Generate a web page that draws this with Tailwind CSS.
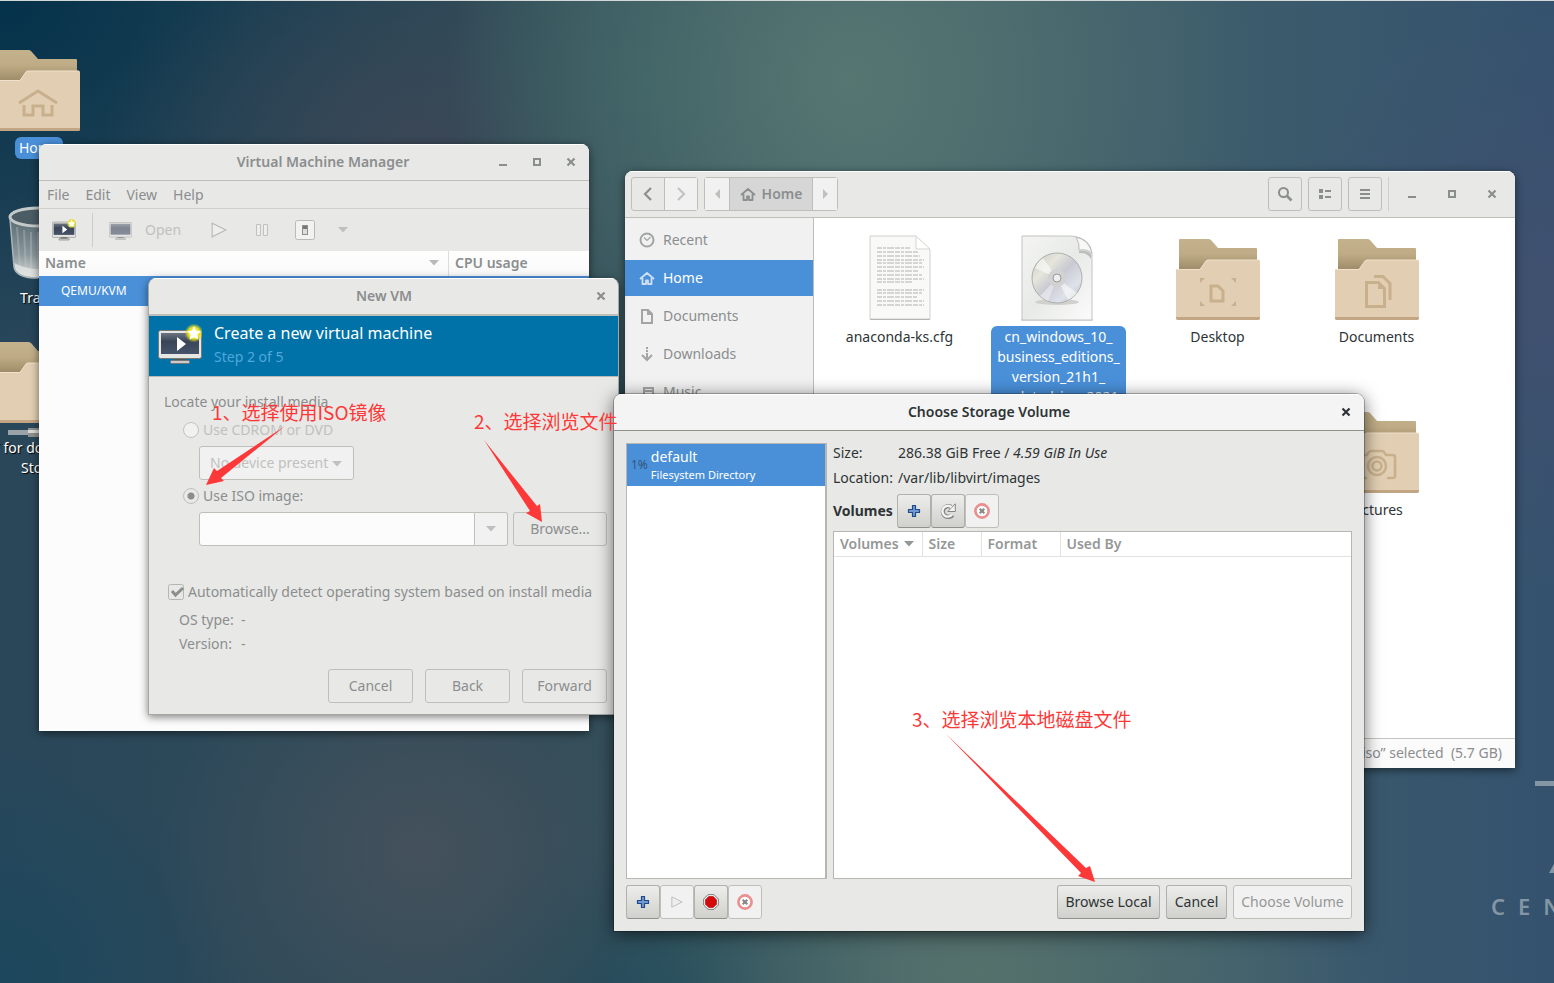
<!DOCTYPE html>
<html lang="en">
<head>
<meta charset="utf-8">
<title>Desktop</title>
<script src="https://cdn.jsdelivr.net/npm/@tailwindcss/browser@4"></script>
</head>
<body class="font-['Noto_Sans','Noto_Sans_CJK_SC',sans-serif] text-sm leading-5 text-[#8b8e8f]">
<svg class="absolute h-0 w-0" aria-hidden="true">
  <defs>
    <linearGradient id="gBack" x1="0" y1="0" x2="0" y2="1"><stop offset="0" stop-color="#c4b28c"/><stop offset=".5" stop-color="#bfac86"/><stop offset="1" stop-color="#9f8d6a"/></linearGradient>
    <linearGradient id="gScreen" x1="0" y1="0" x2="0" y2="1"><stop offset="0" stop-color="#6a7482"/><stop offset=".4" stop-color="#3a4558"/><stop offset="1" stop-color="#46536a"/></linearGradient>
    <linearGradient id="gPaper" x1="0" y1="0" x2="1" y2="1"><stop offset="0" stop-color="#f4f5f3"/><stop offset=".5" stop-color="#e8eae7"/><stop offset="1" stop-color="#fbfbfb"/></linearGradient>
    <linearGradient id="gDisc" x1="0" y1="0" x2="1" y2="1"><stop offset="0" stop-color="#c6c6c6"/><stop offset=".3" stop-color="#e6e6dc"/><stop offset=".5" stop-color="#c9c9d2"/><stop offset=".75" stop-color="#dfe2ea"/><stop offset="1" stop-color="#b9babc"/></linearGradient>
    <linearGradient id="gCan" x1="0" y1="0" x2="0" y2="1"><stop offset="0" stop-color="#5b6c74"/><stop offset=".6" stop-color="#8a979b"/><stop offset="1" stop-color="#d8dcdb"/></linearGradient>
    <radialGradient id="gGlow"><stop offset="0" stop-color="#fdf94a"/><stop offset=".6" stop-color="#e8e020"/><stop offset="1" stop-color="#d8d820" stop-opacity="0"/></radialGradient>
  </defs>
  <symbol id="folder" viewBox="0 0 84 84">
    <path d="M3 2q0-1 1-1h28q2 0 3 1l7 8h38q1 0 1 1v20H3z" fill="url(#gBack)"/>
    <path d="M1 31h23l6-8q1-1 2-1h51q1 0 1 1v57q0 2-2 2H2q-2 0-2-2V32q0-1 1-1z" fill="#e2cfb3"/>
    <path d="M0 80q0 2 2 2h80q2 0 2-2v-1H0z" fill="#c2a684"/>
    <path d="M1 31.500h23l6-8.500q1-1 2-1h51" fill="none" stroke="#f0e2cc"/>
  </symbol>
  <symbol id="house" viewBox="0 0 16 16"><path d="M1 9 8 3l7 6M3.500 8v6h3.500v-3.500h2V14h3.500V8" fill="none" stroke="currentColor" stroke-width="1.800" stroke-linejoin="round"/></symbol>
  <symbol id="min" viewBox="0 0 16 16"><path d="M4 10h8v2H4z" fill="currentColor"/></symbol>
  <symbol id="max" viewBox="0 0 16 16"><path d="M5 5h6v6H5z" fill="none" stroke="currentColor" stroke-width="2"/></symbol>
  <symbol id="close" viewBox="0 0 16 16"><path d="m4.500 4.500 7 7m0-7-7 7" fill="none" stroke="currentColor" stroke-width="2.200"/></symbol>
  <symbol id="caret" viewBox="0 0 10 6"><path d="M0 0h10L5 5.500z" fill="currentColor"/></symbol>
  <symbol id="monitor" viewBox="0 0 44 42">
    <path d="M16 34h12v3H16z" fill="#555"/><rect x="12.500" y="36.500" width="19" height="3" rx="1" fill="#ccc" stroke="#777"/>
    <rect x=".5" y="6.500" width="43" height="28" rx="2" fill="#e6e6e4" stroke="#777976"/>
    <rect x="3" y="9" width="38" height="21" fill="url(#gScreen)"/>
  </symbol>
  <symbol id="vmnew" viewBox="0 0 44 42">
    <use href="#monitor" width="44" height="42"/>
    <path d="M19 13v14l9-7z" fill="#fff"/>
    <circle cx="36" cy="9" r="9.500" fill="url(#gGlow)"/>
    <path d="m36 2 2.100 4.600 4.900.6-3.600 3.400.9 5-4.300-2.400-4.300 2.400.9-5L29 7.200l4.900-.6z" fill="#fff"/>
  </symbol>
  <symbol id="plus" viewBox="0 0 14 14"><path d="M5.500 1.500h3v4h4v3h-4v4h-3v-4h-4v-3h4z" fill="#6f9bd2" stroke="#20498a" stroke-width="1.200" stroke-linejoin="round"/></symbol>
  <symbol id="del" viewBox="0 0 16 16"><circle cx="8" cy="8" r="6.600" fill="#fff" stroke="#ea8e8e" stroke-width="2.600"/><path d="m5.700 5.700 4.600 4.600m0-4.600-4.600 4.600" stroke="#888a85" stroke-width="2.200"/></symbol>
  <symbol id="stop" viewBox="0 0 16 16"><path d="M5 .7h6L15.300 5v6L11 15.300H5L.7 11V5z" fill="#fff" stroke="#777"/><path d="M5.700 2.500h4.600l3.200 3.200v4.600l-3.200 3.200H5.700l-3.200-3.200V5.700z" fill="#d40a0a" stroke="#a40000" stroke-width=".6"/></symbol>
  <symbol id="play" viewBox="0 0 14 14"><path d="M1 1v12l12-6z" fill="#eee" stroke="#b8b8b6"/></symbol>
</svg>

<main class="relative min-h-screen overflow-hidden border-t border-[#d3d7d8] bg-[#2c4a5b] bg-[radial-gradient(ellipse_380px_240px_at_980px_970px,#55716c_0%,transparent_100%),radial-gradient(ellipse_400px_420px_at_850px_80px,#567672_0%,transparent_100%),radial-gradient(ellipse_200px_220px_at_650px_80px,#32585f_0%,transparent_100%),radial-gradient(ellipse_320px_200px_at_420px_140px,#3a4756_0%,transparent_100%),radial-gradient(ellipse_480px_360px_at_0px_0px,#04324a_0%,transparent_100%),radial-gradient(ellipse_260px_240px_at_420px_850px,#44515c_0%,transparent_100%),radial-gradient(ellipse_230px_240px_at_0px_983px,#1c475d_0%,transparent_100%),radial-gradient(ellipse_250px_160px_at_680px_983px,#20495a_0%,transparent_100%),radial-gradient(ellipse_300px_300px_at_1554px_300px,#40506f_0%,transparent_100%),linear-gradient(to_right,#2a475a_0%,#2f4c58_35%,#41606a_58%,#3c5c6c_80%,#34526e_100%)]">

  <!-- Desktop icons -->
  <a href="#home" class="absolute -left-1 top-12 block w-[84px]">
    <span class="relative block"><svg class="h-[84px] w-[84px]"><use href="#folder"/></svg>
      <svg class="absolute left-[21px] top-[38px] h-8 w-[42px]" viewBox="0 0 42 32" fill="none" stroke="#c8b08d" stroke-width="3"><path d="M2 16 21 4l19 12M7 18v10h9v-9h10v9h9V18"/></svg></span>
    <span class="ml-[19px] mt-1 inline-block rounded-md bg-[#4a90d9] px-1 py-px leading-5 text-white">Home</span>
  </a>
  <a href="#trash" class="absolute left-[8px] top-[204px] flex w-[60px] flex-col items-center text-white [text-shadow:1px_1px_1px_#000]">
    <svg class="h-[76px] w-[60px]" viewBox="0 0 60 76"><path d="M2 14 6 62q2 11 24 11t24-11l4-48z" fill="url(#gCan)"/><path d="M9 22l3 40M16 25l2 42M23 27v42M30 27v42" stroke="#c9d2d4" stroke-opacity=".3" stroke-width="2"/><path d="M6 58q24 12 48 0l-1 6q-4 9-23 9T7 64z" fill="#e2e5e4" fill-opacity=".8"/><ellipse cx="30" cy="12" rx="28" ry="9" fill="#4b5c65" stroke="#c4c9c9" stroke-width="3"/><path d="M2 14 6 62q2 11 24 11" fill="none" stroke="#aab3b5" stroke-width="1.500"/></svg>
    <span class="mt-[7px]">Trash</span>
  </a>
  <a href="#volume" class="absolute -left-1 top-[340px] block w-[84px] whitespace-nowrap text-white [text-shadow:1px_1px_1px_#000]">
    <svg class="h-[84px] w-[84px]"><use href="#folder"/></svg>
    <svg class="mt-px h-3 w-[76px] pl-2" viewBox="0 0 68 12"><path d="M4 4h24v5H4z" fill="#9aa4a8"/><path d="M24 2h20v9H24z" fill="#8f8f8d"/><path d="M24 4h20v3H24z" fill="#d8d8d6"/></svg>
    <span class="-ml-1 block">T for do</span>
    <span class="block pl-[25px]">Sto</span>
  </a>

  <!-- Wallpaper lettering -->
  <div class="absolute left-[1491px] top-[780px] text-[#8496a3]">
    <svg class="h-[109px] w-24" viewBox="0 0 96 109"><path d="M44 0h50v5H44zM70 70h8l-13 22h-7z" fill="currentColor"/></svg>
    <div class="flex gap-[13px] text-[22px] font-semibold leading-8"><span>C</span><span>E</span><span>N</span></div>
  </div>

  <!-- Files -->
  <section class="absolute left-[625px] top-[170px] flex h-[597px] w-[890px] flex-col overflow-hidden rounded-t-lg bg-white shadow-[0_2px_9px_rgba(0,0,0,.55)]">
    <header class="flex h-[47px] items-center border-b border-[#bdbdb9] bg-[#e8e8e6] pl-[6px] pr-[7px] shadow-[inset_0_1px_0_#fff]">
      <div class="flex h-[34px] rounded-[3px] border border-[#bfbfba]">
        <button aria-label="Back" class="flex w-8 items-center justify-center"><svg class="h-4 w-4" viewBox="0 0 16 16" fill="none" stroke="currentColor" stroke-width="2.200"><path d="m11 2-6 6 6 6"/></svg></button>
        <button aria-label="Forward" disabled class="flex w-[33px] items-center justify-center border-l border-[#bfbfba] bg-[#f1f1f1] text-[#c3c4c1]"><svg class="h-4 w-4" viewBox="0 0 16 16" fill="none" stroke="currentColor" stroke-width="2.200"><path d="m5 2 6 6-6 6"/></svg></button>
      </div>
      <nav class="ml-[6px] flex h-[34px] rounded-[3px] border border-[#bfbfba] font-semibold">
        <button aria-label="Scroll left" disabled class="flex w-6 items-center justify-center bg-[#f1f1f1] text-[#bfc0bd]"><svg class="h-[10px] w-[5px]" viewBox="0 0 5 10"><path d="M5 0v10L0 5z" fill="currentColor"/></svg></button>
        <button class="flex w-[84px] items-center justify-center gap-[6px] border-x border-[#bfbfba] bg-[#d6d6d6]"><svg class="h-4 w-4"><use href="#house"/></svg>Home</button>
        <button aria-label="Scroll right" disabled class="flex w-6 items-center justify-center bg-[#f1f1f1] text-[#bfc0bd]"><svg class="h-[10px] w-[5px]" viewBox="0 0 5 10"><path d="M0 0v10l5-5z" fill="currentColor"/></svg></button>
      </nav>
      <div class="ml-auto flex gap-[6px]">
        <button aria-label="Search" class="flex h-[34px] w-[34px] items-center justify-center rounded-[3px] border border-[#bfbfba]"><svg class="h-4 w-4" viewBox="0 0 16 16" fill="none" stroke="currentColor" stroke-width="2"><circle cx="6.500" cy="6.500" r="4.500"/><path d="m10 10 4.500 4.500" stroke-width="2.600"/></svg></button>
        <button aria-label="List view" class="flex h-[34px] w-[34px] items-center justify-center rounded-[3px] border border-[#bfbfba]"><svg class="h-4 w-4" viewBox="0 0 16 16" fill="currentColor"><path d="M2 3h4v4H2zM2 9h4v4H2zM8 4h6v2H8zM8 10h6v2H8z"/></svg></button>
        <button aria-label="Menu" class="flex h-[34px] w-[34px] items-center justify-center rounded-[3px] border border-[#bfbfba]"><svg class="h-4 w-4" viewBox="0 0 16 16" fill="currentColor"><path d="M3 3h10v2H3zM3 7h10v2H3zM3 11h10v2H3z"/></svg></button>
      </div>
      <div class="ml-[6px] flex h-[34px] items-center gap-6 border-l border-[#cfcfcc] pl-[15px] pr-2">
        <button aria-label="Minimize"><svg class="h-4 w-4"><use href="#min"/></svg></button>
        <button aria-label="Maximize"><svg class="h-4 w-4"><use href="#max"/></svg></button>
        <button aria-label="Close"><svg class="h-4 w-4"><use href="#close"/></svg></button>
      </div>
    </header>
    <div class="flex min-h-0 flex-1">
      <nav class="flex w-[189px] flex-col gap-[2px] border-r border-[#bdbdb9] bg-[#f1f1f1] pt-[4px]">
        <a href="#recent" class="flex h-9 items-center gap-2 pl-[14px]"><svg class="h-4 w-4" viewBox="0 0 16 16" fill="none" stroke="#a3a5a5" stroke-width="2"><circle cx="8" cy="8" r="6.500"/><path d="m5 5.500 3 3 3.500-3.500" stroke-width="1.200"/></svg>Recent</a>
        <a href="#home" class="flex h-9 items-center gap-2 bg-[#4a90d9] pl-[14px] text-white"><svg class="h-4 w-4 text-[#cfe0f4]"><use href="#house"/></svg>Home</a>
        <a href="#documents" class="flex h-9 items-center gap-2 pl-[14px]"><svg class="h-4 w-4" viewBox="0 0 16 16" fill="none" stroke="#a3a5a5" stroke-width="2"><path d="M3 2h6l4 4v9H3zM9 2v4h4"/></svg>Documents</a>
        <a href="#downloads" class="flex h-9 items-center gap-2 pl-[14px]"><svg class="h-4 w-4" viewBox="0 0 16 16" fill="none" stroke="#a3a5a5" stroke-width="2"><path d="M8 1v2m0 1v2m0 1v6M3 9l5 5 5-5"/></svg>Downloads</a>
        <a href="#music" class="flex h-9 items-center gap-2 pl-[14px]"><svg class="h-4 w-4" viewBox="0 0 16 16" fill="none" stroke="#a3a5a5" stroke-width="2"><path d="M5 12V4h9v8M5 7h9"/><circle cx="3.500" cy="12.500" r="1.500"/><circle cx="12" cy="12.500" r="1.500"/></svg>Music</a>
      </nav>
      <div class="grid flex-1 grid-cols-[repeat(4,159px)] grid-rows-[173px_173px] pl-[6px] pt-[17px] text-center text-[#2e3436]">
        <div class="flex flex-col items-center">
          <svg class="h-[86px] w-16" viewBox="0 0 64 86"><path d="M2 1h46l14 14v69H2z" fill="#f9f9f8" stroke="#d0d0ce"/><path d="M48 1v13h14z" fill="#fff" stroke="#d5d5d3"/><path d="M2 84.500h60" stroke="#b5b5b3"/><path d="M9 13h33M9 17h41M9 21h43M9 25h47M9 28h46M9 32h47M9 36h42M9 40h45M9 44h47M9 47h35M9 55h47M9 58h45M9 62h40M9 66h47M9 70h47" stroke="#8c8c8a" stroke-opacity=".65" stroke-dasharray="5 1 3 1 7 1"/></svg>
          <span class="mt-[6px]">anaconda-ks.cfg</span>
        </div>
        <div class="flex flex-col items-center">
          <svg class="h-[86px] w-20" viewBox="0 0 80 86"><path d="M2 85h72" stroke="#bbb"/><path d="M3 1h50q19 2 20 18v66H3z" fill="url(#gPaper)" stroke="#c2c3c1"/><path d="M57 2q4 7 3 13 8-1 13 3Q70 5 57 2z" fill="#f8f8f8" stroke="#bdbdbb"/><path d="M60 16q8-1 12 3v5q-4-7-12-6z" fill="#bcbdbb"/><ellipse cx="38" cy="67" rx="22" ry="3" fill="#d0d1cf"/><circle cx="38" cy="43" r="25" fill="url(#gDisc)" stroke="#adaeae"/><path d="M38 43 16 33a25 25 0 0 1 8-10zM38 43l20 15a25 25 0 0 1-9 7z" fill="#fff" fill-opacity=".55"/><path d="M38 43 29 66a25 25 0 0 1-8-5z" fill="#fff" fill-opacity=".4"/><circle cx="38" cy="43" r="9" fill="#d2d2d2"/><circle cx="38" cy="43" r="4" fill="#eee" stroke="#999"/></svg>
          <span class="mt-[5px] w-[135px] rounded-t-md bg-[#4a90d9] pt-px leading-5 text-white">cn_windows_10_<br>business_editions_<br>version_21h1_<br>updated_jan_2021</span>
        </div>
        <div class="flex flex-col items-center pt-[3px]">
          <div class="relative"><svg class="h-[84px] w-[84px]"><use href="#folder"/></svg>
          <svg class="absolute left-6 top-10 h-7 w-9" viewBox="0 0 36 28" fill="#c8b08d"><path d="M0 0h5L0 5zM36 0h-5l5 5zM0 28v-5l5 5zM36 28v-5l-5 5z"/><path d="M11 8h7l5 5v10H11z" fill="none" stroke="#c8b08d" stroke-width="3"/></svg></div>
          <span class="mt-[5px]">Desktop</span>
        </div>
        <div class="flex flex-col items-center pt-[3px]">
          <div class="relative"><svg class="h-[84px] w-[84px]"><use href="#folder"/></svg>
          <svg class="absolute left-7 top-9 h-9 w-8" viewBox="0 0 32 36" fill="none" stroke="#c8b08d" stroke-width="3"><path d="M3.500 8.500h12l6 6v18h-18zM11 2.500h9l7 7V26"/><path d="M15 8v7h7z" fill="#c8b08d" stroke="none"/></svg></div>
          <span class="mt-[5px]">Documents</span>
        </div>
        <div class="col-start-4 flex flex-col items-center pt-[3px]">
          <div class="relative"><svg class="h-[84px] w-[84px]"><use href="#folder"/></svg>
          <svg class="absolute left-5 top-9 h-9 w-11" viewBox="0 0 44 36" fill="none" stroke="#c8b08d" stroke-width="2.600"><path d="M12 31H5q-2 0-2-2V10q0-2 2-2h7q2-4 4-4h11q2 0 4 4h6q3 0 3 2v19q0 2-2 2h-6"/><circle cx="22" cy="19" r="9"/><circle cx="22" cy="19" r="4.500"/></svg></div>
          <span class="mt-[5px]">Pictures</span>
        </div>
      </div>
    </div>
    <footer class="flex h-[30px] items-center justify-end whitespace-pre border-t border-[#c4c4c0] bg-[#fbfbfb] pb-[2px] pr-[13px]">updated_jan_2021.iso” selected  (5.7 GB)</footer>
  </section>

  <!-- Virtual Machine Manager -->
  <section class="absolute left-[39px] top-[143px] flex h-[587px] w-[550px] flex-col overflow-hidden rounded-t-lg bg-[#fcfcfc] shadow-[0_2px_9px_rgba(0,0,0,.55)]">
    <header class="flex h-[37px] items-center border-b border-[#bdbdb9] bg-[#e8e8e6] pl-[112px] pr-[10px] shadow-[inset_0_1px_0_#fff]">
      <h1 class="flex-1 text-center font-semibold">Virtual Machine Manager</h1>
      <div class="flex gap-[18px]">
        <button aria-label="Minimize"><svg class="h-4 w-4"><use href="#min"/></svg></button>
        <button aria-label="Maximize"><svg class="h-4 w-4"><use href="#max"/></svg></button>
        <button aria-label="Close"><svg class="h-4 w-4"><use href="#close"/></svg></button>
      </div>
    </header>
    <nav class="flex h-7 items-center gap-4 border-b border-[#cfcfcc] bg-[#e8e8e6] pl-2">
      <button>File</button><button>Edit</button><button>View</button><button>Help</button>
    </nav>
    <div class="flex h-[42px] items-center bg-[#e8e8e6] pl-[13px] text-[#c0c1be]">
      <button aria-label="New virtual machine"><svg class="h-6 w-6"><use href="#vmnew"/></svg></button>
      <span class="ml-4 h-[34px] border-l border-[#cdcdca]"></span>
      <button disabled class="ml-4 flex items-center gap-[13px]"><svg class="h-6 w-[23px] opacity-60"><use href="#monitor"/></svg>Open</button>
      <button disabled aria-label="Run" class="ml-[30px]"><svg class="h-4 w-4"><use href="#play"/></svg></button>
      <button disabled aria-label="Pause" class="ml-[27px]"><svg class="h-4 w-4" viewBox="0 0 16 16" fill="#eee" stroke="#c0c0be"><path d="M2.500 2.500h4v11h-4zM9.500 2.500h4v11h-4z"/></svg></button>
      <button disabled aria-label="Shut down" class="ml-[25px]"><svg class="h-5 w-5" viewBox="0 0 20 20"><rect x=".5" y=".5" width="19" height="19" rx="2" fill="#f2f2f2" stroke="#b9b9b7"/><rect x="7.500" y="5.500" width="5" height="9" fill="#ddd" stroke="#8f8f8d"/><path d="M8 6h4v3H8z" fill="#777"/></svg></button>
      <button disabled aria-label="Shut down options" class="ml-[23px]"><svg class="h-[6px] w-[10px]"><use href="#caret"/></svg></button>
    </div>
    <div class="flex h-[25px] items-center bg-gradient-to-b from-white to-[#f8f8f8] font-semibold">
      <div class="flex h-full w-[410px] items-center justify-between border-r border-[#dcdcda] pb-px pl-[6px] pr-[9px]">Name<svg class="h-[6px] w-[10px] text-[#b9bab8]"><use href="#caret"/></svg></div>
      <div class="pb-px pl-[6px]">CPU usage</div>
    </div>
    <div class="flex h-[30px] items-center bg-[#4a90d9] pl-[22px] text-xs text-white">QEMU/KVM</div>
  </section>

  <!-- New VM -->
  <section class="absolute left-[148px] top-[277px] w-[471px] overflow-hidden rounded-t-lg border border-t-0 border-[#a7a7a3] bg-[#e8e8e6] shadow-[0_2px_9px_rgba(0,0,0,.5)]">
    <header class="flex h-[38px] items-center border-b-2 border-[#bfbfba] pl-[26px] pr-[9px] shadow-[inset_0_1px_0_#fff]">
      <h2 class="flex-1 text-center font-semibold">New VM</h2>
      <button aria-label="Close"><svg class="h-4 w-4"><use href="#close"/></svg></button>
    </header>
    <div class="flex h-[61px] items-center gap-3 border-b border-[#b9b9b5] bg-[#0072a8] pb-[2px] pl-[9px]">
      <svg class="h-[42px] w-11"><use href="#vmnew"/></svg>
      <div><p class="text-base leading-6 text-white">Create a new virtual machine</p><p class="leading-6 text-[#4fa8dc]">Step 2 of 5</p></div>
    </div>
    <form class="pb-[11px] pr-[11px] pt-[15px]">
      <p class="pl-[15px]">Locate your install media</p>
      <label class="mt-2 flex items-center gap-1 pl-[34px] text-[#c0c1be]"><input type="radio" name="media" disabled class="h-4 w-4 appearance-none rounded-full border border-[#c3c4c1] bg-[#f1f1f1]">Use CDROM or DVD</label>
      <div class="relative ml-[50px] mt-[6px] w-[155px] text-[#c0c1be]">
        <select disabled aria-label="Device" class="h-[34px] w-full appearance-none rounded-[3px] border border-[#bfbfba] bg-[#f1f1f1] pl-[10px] opacity-100"><option>No device present</option></select>
        <svg class="absolute right-[12px] top-[15px] h-[6px] w-[10px]"><use href="#caret"/></svg>
      </div>
      <label class="mt-[6px] flex items-center gap-1 pl-[34px]"><input type="radio" name="media" checked class="h-4 w-4 appearance-none rounded-full border border-[#bfbfba] bg-[radial-gradient(circle,#8b8e8f_3px,#e8e8e6_4px)]">Use ISO image:</label>
      <div class="mt-[6px] flex h-[34px] pl-[50px]">
        <input type="text" aria-label="ISO image" class="min-w-0 flex-1 rounded-l-[3px] border border-[#bfbfba] bg-[#fcfcfc] px-2">
        <button type="button" aria-label="Recent images" class="flex w-[33px] items-center justify-center rounded-r-[3px] border border-l-0 border-[#bfbfba] bg-[#f1f1f1] text-[#bfc0bd]"><svg class="h-[6px] w-[10px]"><use href="#caret"/></svg></button>
        <button type="button" class="ml-[5px] w-[94px] rounded-[3px] border border-[#bfbfba]">Browse...</button>
      </div>
      <label class="relative mt-9 flex items-center gap-1 whitespace-nowrap pl-[19px]"><input type="checkbox" checked class="sr-only"><svg class="h-4 w-4 flex-none" viewBox="0 0 16 16"><rect x=".5" y=".5" width="15" height="15" rx="2" fill="none" stroke="#b5b6b2"/><path d="m4 7 3.500 4L15 4" fill="none" stroke="#8b8e8f" stroke-width="3"/></svg>Automatically detect operating system based on install media</label>
      <dl class="mt-2 grid grid-cols-[62px_auto] gap-y-1 pl-[30px]"><dt>OS type:</dt><dd>-</dd><dt>Version:</dt><dd>-</dd></dl>
      <div class="mt-[15px] flex justify-end gap-3">
        <button type="button" class="h-[34px] w-[85px] rounded-[3px] border border-[#bfbfba]">Cancel</button>
        <button type="button" class="h-[34px] w-[85px] rounded-[3px] border border-[#bfbfba]">Back</button>
        <button type="button" class="h-[34px] w-[85px] rounded-[3px] border border-[#bfbfba]">Forward</button>
      </div>
    </form>
  </section>

  <!-- Choose Storage Volume -->
  <section class="absolute left-[614px] top-[393px] flex h-[537px] w-[750px] flex-col overflow-hidden rounded-t-lg bg-[#e8e8e6] text-[#2e3436] shadow-[0_0_0_1px_rgba(0,0,0,.25),0_3px_18px_rgba(0,0,0,.6)]">
    <header class="flex h-[37px] items-center border-b border-[#8f918d] bg-[#f4f4f4] pl-[26px] pr-[10px] shadow-[inset_0_1px_0_#fff]">
      <h2 class="flex-1 text-center font-semibold">Choose Storage Volume</h2>
      <button aria-label="Close"><svg class="h-4 w-4"><use href="#close"/></svg></button>
    </header>
    <div class="flex min-h-0 flex-1 gap-[6px] px-3 pt-3">
      <div class="w-[201px] border border-r-2 border-[#b6b6b3] bg-white">
        <div class="flex h-[42px] items-center gap-[3px] bg-[#4a90d9] pl-1 text-white"><span class="text-xs text-[#33557d]">1%</span><div><p class="leading-5">default</p><p class="text-[11px] leading-4">Filesystem Directory</p></div></div>
      </div>
      <div class="flex min-w-0 flex-1 flex-col">
        <dl class="grid grid-cols-[65px_auto] gap-y-[5px]"><dt>Size:</dt><dd>286.38 GiB Free / <i>4.59 GiB In Use</i></dd><dt>Location:</dt><dd>/var/lib/libvirt/images</dd></dl>
        <div class="mb-[3px] mt-[6px] flex items-center">
          <h3 class="w-16 font-bold">Volumes</h3>
          <button aria-label="New volume" class="flex h-[34px] w-[34px] items-center justify-center rounded-[3px] border border-[#b0b0ac] border-b-[#8f918d] bg-gradient-to-b from-[#ededeb] to-[#d0d0cc]"><svg class="h-[14px] w-[14px]"><use href="#plus"/></svg></button>
          <button aria-label="Refresh" class="flex h-[34px] w-[34px] items-center justify-center rounded-[3px] border border-[#b0b0ac] border-b-[#8f918d] bg-gradient-to-b from-[#ededeb] to-[#d0d0cc]"><svg class="h-4 w-4" viewBox="0 0 16 16" fill="none"><path d="M11 3.800A5.400 5.400 0 1 0 12.500 12" stroke="#858583" stroke-width="4.400"/><path d="M15.300.8v7.700H7.800l3-3z" fill="#f4f4f4" stroke="#858583"/><path d="M11.500 4.300A5.400 5.400 0 1 0 12 11.600" stroke="#f4f4f4" stroke-width="2.400"/></svg></button>
          <button aria-label="Delete volume" disabled class="flex h-[34px] w-[34px] items-center justify-center rounded-[3px] border border-[#bfbfba] bg-[#f1f1f1]"><svg class="h-4 w-4"><use href="#del"/></svg></button>
        </div>
        <div class="flex-1 border border-[#b6b6b3] bg-white">
          <table class="w-full table-fixed text-left text-[#959797]">
            <thead><tr class="h-6 border-b border-[#e2e2e0]">
              <th class="w-[88px] border-r border-[#e2e2e0] pl-[6px] font-semibold"><span class="flex items-center gap-[5px]">Volumes<svg class="h-[6px] w-[10px]"><use href="#caret"/></svg></span></th>
              <th class="w-[59px] border-r border-[#e2e2e0] pl-[6px] font-semibold">Size</th>
              <th class="w-[79px] border-r border-[#e2e2e0] pl-[6px] font-semibold">Format</th>
              <th class="pl-[6px] font-semibold">Used By</th></tr></thead>
          </table>
        </div>
      </div>
    </div>
    <footer class="flex px-3 pb-3 pt-[6px]">
      <button aria-label="Add pool" class="flex h-[34px] w-[34px] items-center justify-center rounded-[3px] border border-[#b0b0ac] border-b-[#8f918d] bg-gradient-to-b from-[#ededeb] to-[#d0d0cc]"><svg class="h-[14px] w-[14px]"><use href="#plus"/></svg></button>
      <button aria-label="Start pool" disabled class="flex h-[34px] w-[34px] items-center justify-center rounded-[3px] border border-[#bfbfba] bg-[#f1f1f1]"><svg class="h-3 w-3"><use href="#play"/></svg></button>
      <button aria-label="Stop pool" class="flex h-[34px] w-[34px] items-center justify-center rounded-[3px] border border-[#b0b0ac] border-b-[#8f918d] bg-gradient-to-b from-[#ededeb] to-[#d0d0cc]"><svg class="h-4 w-4"><use href="#stop"/></svg></button>
      <button aria-label="Delete pool" disabled class="flex h-[34px] w-[34px] items-center justify-center rounded-[3px] border border-[#bfbfba] bg-[#f1f1f1]"><svg class="h-4 w-4"><use href="#del"/></svg></button>
      <div class="ml-auto flex gap-[6px] whitespace-nowrap">
        <button class="h-[34px] w-[103px] rounded-[3px] border border-[#b0b0ac] border-b-[#8f918d] bg-gradient-to-b from-[#ededeb] to-[#d0d0cc]">Browse Local</button>
        <button class="h-[34px] w-[61px] rounded-[3px] border border-[#b0b0ac] border-b-[#8f918d] bg-gradient-to-b from-[#ededeb] to-[#d0d0cc]">Cancel</button>
        <button disabled class="h-[34px] w-[119px] rounded-[3px] border border-[#bfbfba] bg-[#f1f1f1] text-[#959797]">Choose Volume</button>
      </div>
    </footer>
  </section>

  <!-- Step notes and arrows -->
  <svg class="pointer-events-none absolute left-0 top-0 h-[982px] w-[1554px]" viewBox="0 1 1554 982" fill="#fd3838">
    <path d="M285 426 217 471 214 468 206 485 224 481 221 478z"/>
    <path d="M484 440 537 506 540 504 542 522 526 513 530 511z"/>
    <path d="M946 734 1086 868 1090 866 1095 882 1078 876 1081 873z"/>
  </svg>
  <p class="absolute left-[212px] top-[397px] whitespace-nowrap font-['Noto_Sans_CJK_SC',sans-serif] text-[19px] leading-7 text-[#fd3838]">1、选择使用ISO镜像</p>
  <p class="absolute left-[474px] top-[406px] whitespace-nowrap font-['Noto_Sans_CJK_SC',sans-serif] text-[19px] leading-7 text-[#fd3838]">2、选择浏览文件</p>
  <p class="absolute left-[912px] top-[704px] whitespace-nowrap font-['Noto_Sans_CJK_SC',sans-serif] text-[19px] leading-7 text-[#fd3838]">3、选择浏览本地磁盘文件</p>
</main>
</body>
</html>
